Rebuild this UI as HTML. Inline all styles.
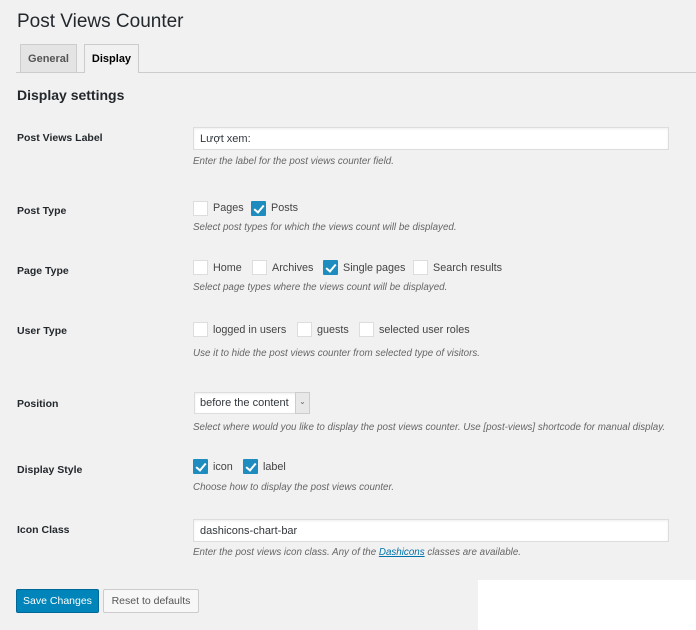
<!DOCTYPE html>
<html><head><meta charset="utf-8"><style>
body{margin:0;width:696px;height:630px;background:#f1f1f1;font-family:"Liberation Sans",sans-serif;color:#23282d;position:relative;overflow:hidden}
.a{position:absolute;white-space:nowrap}
.lbl{font-size:10.5px;font-weight:bold;color:#23282d}
.d{font-size:9.8px;font-style:italic;color:#666}
.t{font-size:10.8px;color:#444}
.in{position:absolute;background:#fff;border:1px solid #ddd;box-shadow:inset 0 1px 2px rgba(0,0,0,.07);font-size:11px;color:#32373c;box-sizing:border-box;padding:5px 6px}
.cb{position:absolute;width:15px;height:15px;background:#fff;border:1px solid #ddd;box-sizing:border-box}
.ck{position:absolute;width:15px;height:15px;background:#1e8cbe;border-radius:1px}
.ck:after{content:"";position:absolute;left:5px;top:2px;width:4px;height:8px;border:solid #fff;border-width:0 2px 2px 0;transform:rotate(40deg)}
</style></head><body>
<div class="a" style="left:17px;top:11px;font-size:19px;color:#23282d">Post Views Counter</div>
<div class="a" style="left:16px;top:72px;width:680px;height:1px;background:#ccc"></div>
<div class="a" style="left:20px;top:44px;width:57px;height:28px;background:#e4e4e4;border:1px solid #ccc;border-bottom:none;box-sizing:border-box;font-size:11px;color:#555;text-align:center;line-height:28px;font-weight:bold">General</div>
<div class="a" style="left:84px;top:44px;width:55px;height:29px;background:#f1f1f1;border:1px solid #ccc;border-bottom:none;box-sizing:border-box;font-size:11px;color:#000;text-align:center;line-height:28px;font-weight:bold">Display</div>
<div class="a" style="left:17px;top:87px;font-size:14px;font-weight:bold">Display settings</div>

<div class="a lbl" style="left:17px;top:132px">Post Views Label</div>
<div class="in" style="left:193px;top:127px;width:476px;height:23px">Lượt xem:</div>
<div class="a d" style="left:193px;top:156px">Enter the label for the post views counter field.</div>

<div class="a lbl" style="left:17px;top:205px">Post Type</div>
<div class="cb" style="left:193px;top:201px"></div><div class="a t" style="left:213px;top:202px">Pages</div>
<div class="ck" style="left:251px;top:201px"></div><div class="a t" style="left:271px;top:202px">Posts</div>
<div class="a d" style="left:193px;top:222px">Select post types for which the views count will be displayed.</div>

<div class="a lbl" style="left:17px;top:265px">Page Type</div>
<div class="cb" style="left:193px;top:260px"></div><div class="a t" style="left:213px;top:262px">Home</div>
<div class="cb" style="left:252px;top:260px"></div><div class="a t" style="left:272px;top:262px">Archives</div>
<div class="ck" style="left:323px;top:260px"></div><div class="a t" style="left:343px;top:262px">Single pages</div>
<div class="cb" style="left:413px;top:260px"></div><div class="a t" style="left:433px;top:262px">Search results</div>
<div class="a d" style="left:193px;top:282px">Select page types where the views count will be displayed.</div>

<div class="a lbl" style="left:17px;top:325px">User Type</div>
<div class="cb" style="left:193px;top:322px"></div><div class="a t" style="left:213px;top:324px">logged in users</div>
<div class="cb" style="left:297px;top:322px"></div><div class="a t" style="left:317px;top:324px">guests</div>
<div class="cb" style="left:359px;top:322px"></div><div class="a t" style="left:379px;top:324px">selected user roles</div>
<div class="a d" style="left:193px;top:348px">Use it to hide the post views counter from selected type of visitors.</div>

<div class="a lbl" style="left:17px;top:398px">Position</div>
<div class="in" style="left:194px;top:392px;width:116px;height:22px;padding:4px 5px;border-color:#ddd">before the content</div>
<div class="a" style="left:295px;top:392px;width:15px;height:22px;background:#e8e8e8;border:1px solid #ccc;box-sizing:border-box;font-size:8px;color:#666;text-align:center;line-height:18px">&#8964;</div>
<div class="a d" style="left:193px;top:422px">Select where would you like to display the post views counter. Use [post-views] shortcode for manual display.</div>

<div class="a lbl" style="left:17px;top:464px">Display Style</div>
<div class="ck" style="left:193px;top:459px"></div><div class="a t" style="left:213px;top:461px">icon</div>
<div class="ck" style="left:243px;top:459px"></div><div class="a t" style="left:263px;top:461px">label</div>
<div class="a d" style="left:193px;top:482px">Choose how to display the post views counter.</div>

<div class="a lbl" style="left:17px;top:524px">Icon Class</div>
<div class="in" style="left:193px;top:519px;width:476px;height:23px">dashicons-chart-bar</div>
<div class="a d" style="left:193px;top:547px">Enter the post views icon class. Any of the <span style="color:#0073aa;text-decoration:underline">Dashicons</span> classes are available.</div>

<div class="a" style="left:16px;top:589px;width:83px;height:24px;background:#0085ba;border:1px solid #006799;box-sizing:border-box;border-radius:2px;color:#fff;font-size:10.5px;text-align:center;line-height:22px">Save Changes</div>
<div class="a" style="left:103px;top:589px;width:96px;height:24px;background:#f7f7f7;border:1px solid #ccc;box-sizing:border-box;border-radius:2px;color:#555;font-size:10.5px;text-align:center;line-height:22px">Reset to defaults</div>
<div class="a" style="left:478px;top:580px;width:218px;height:50px;background:#fff"></div>
</body></html>
